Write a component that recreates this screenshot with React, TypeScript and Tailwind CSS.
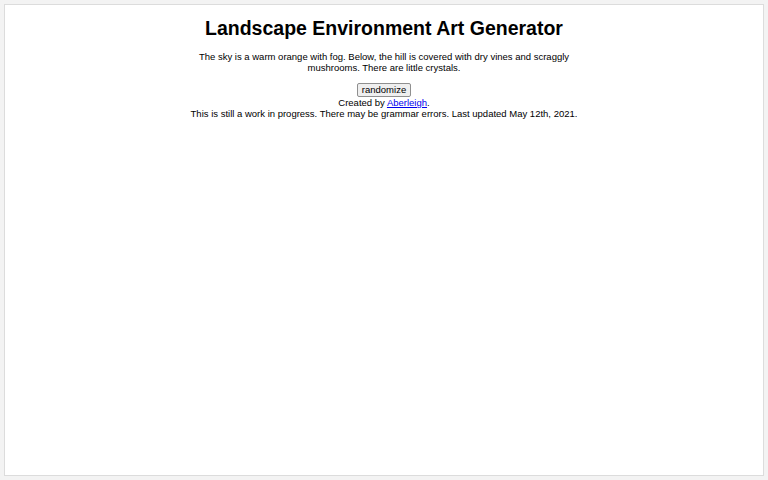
export default function App() {
  return (
    <div className="h-[480px] w-[768px] bg-[#f3f3f3] p-[4px] font-['Liberation_Sans',Arial,sans-serif] text-black">
      <div className="flex h-full flex-col items-center border border-[#dcdcdc] bg-white">
        <h1 className="mt-[11px] text-[19.5px] font-bold leading-[24px]">
          Landscape Environment Art Generator
        </h1>
        <p className="mt-[11px] max-w-[382px] text-center text-[9.5px] leading-[11px]">
          The sky is a warm orange with fog. Below, the hill is covered with dry vines and scraggly
          mushrooms. There are little crystals.
        </p>
        <button className="mt-[10px] h-[14px] rounded-[2px] border border-[#8f8f8f] bg-[#efefef] px-[4px] text-[9.5px] leading-[12px]">
          randomize
        </button>
        <div className="text-[9.5px] leading-[11px]">
          Created by{" "}
          <a href="#" className="text-[#0000ee] underline">
            Aberleigh
          </a>
          .
        </div>
        <div className="text-[9.5px] leading-[11px]">
          This is still a work in progress. There may be grammar errors. Last updated May 12th, 2021.
        </div>
      </div>
    </div>
  );
}
